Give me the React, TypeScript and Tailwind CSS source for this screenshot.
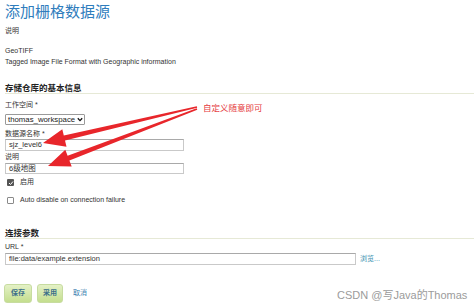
import React from "react";

const cn = '"Liberation Sans", "Noto Sans CJK SC", sans-serif';

function Label({ children, className = "" }: { children: React.ReactNode; className?: string }) {
  return <div className={`h-[8px] text-[7px] leading-[8px] text-[#333] ${className}`}>{children}</div>;
}

function Input({ value, className = "" }: { value: string; className?: string }) {
  return (
    <div
      className={`flex items-center border border-[#c9c9c9] border-t-[#a9a9a9] bg-white pl-[3px] text-[7.5px] text-[#333] ${className}`}
    >
      {value}
    </div>
  );
}

export default function App() {
  return (
    <div
      className="relative h-[306px] w-[474px] overflow-hidden bg-white pl-[5px] text-[#333]"
      style={{ fontFamily: cn }}
    >
      <h1 className="mt-[2px] h-[20px] text-[15px] leading-[20px] text-[#2f7dbd]">添加栅格数据源</h1>
      <Label className="mt-[5px]">说明</Label>
      <Label className="mt-[12px]">GeoTIFF</Label>
      <Label className="mt-[3px]">Tagged Image File Format with Geographic information</Label>

      <div className="mt-[17px] h-[11px] border-b border-[#e6e9d6] text-[8.5px] font-bold leading-[10px] text-[#222]">
        存储仓库的基本信息
      </div>
      <Label className="mt-[7px]">工作空间 *</Label>
      <div className="mt-[5px] flex h-[11px] w-[80px] items-center justify-between overflow-hidden rounded-[1px] border border-[#9a9a9a] bg-white pl-[2px] pr-[1.5px] text-[7.8px] text-[#222]">
        <span className="whitespace-nowrap">thomas_workspace</span>
        <svg className="shrink-0" width="6" height="5" viewBox="0 0 6 5">
          <path d="M0.8 1.2 L3 3.6 L5.2 1.2" fill="none" stroke="#111" strokeWidth="1.3" />
        </svg>
      </div>
      <Label className="mt-[5px]">数据源名称 *</Label>
      <Input value="sjz_level6" className="mt-[1px] h-[12px] w-[179px]" />
      <Label className="mt-[2px]">说明</Label>
      <Input value="6级地图" className="mt-[2px] h-[11px] w-[179px]" />

      <div className="mt-[4px] flex h-[9px] items-center pl-[2px] text-[7px]">
        <span className="flex h-[7px] w-[7px] items-center justify-center rounded-[1px] bg-[#555]">
          <svg width="6" height="6" viewBox="0 0 6 6">
            <path d="M1 3 L2.5 4.5 L5 1.5" fill="none" stroke="#fff" strokeWidth="1" />
          </svg>
        </span>
        <span className="ml-[6px]">启用</span>
      </div>
      <div className="mt-[9px] flex h-[9px] items-center pl-[2px] text-[7px]">
        <span className="h-[7px] w-[7px] rounded-[1px] border border-[#8a8a8a] bg-white" />
        <span className="ml-[6px]">Auto disable on connection failure</span>
      </div>

      <div className="mt-[23px] h-[11px] border-b border-[#e6e9d6] text-[8.5px] font-bold leading-[10px] text-[#222]">
        连接参数
      </div>
      <Label className="mt-[4px]">URL *</Label>
      <div className="mt-[2px] flex items-center">
        <Input value="file:data/example.extension" className="h-[12px] w-[351px]" />
        <span className="ml-[4px] text-[7px] text-[#3a8fb0]">浏览...</span>
      </div>

      <div className="mt-[19px] -ml-[1px] flex h-[19px] items-center">
        <button className="h-[19px] w-[28px] rounded-[3px] border border-[#c7dca0] bg-gradient-to-b from-[#e4f1c6] to-[#c4de8e] text-[7px] font-bold text-[#3b6f8a]">
          保存
        </button>
        <button className="ml-[5px] h-[19px] w-[26px] rounded-[3px] border border-[#c7dca0] bg-gradient-to-b from-[#e4f1c6] to-[#c4de8e] text-[7px] font-bold text-[#3b6f8a]">
          采用
        </button>
        <span className="ml-[10px] text-[7px] text-[#3b7fb0]">取消</span>
      </div>

      <div className="absolute left-[203px] top-[103px] text-[8.5px] leading-[11px] text-[#e5393d]">自定义随意即可</div>
      <svg className="pointer-events-none absolute left-0 top-0" width="474" height="306" viewBox="0 0 474 306">
        <polygon
          fill="#e8262b"
          points="43,143 66.5,146.8 65,140.4 197.2,107.8 196.8,106.2 63.8,135.6 62.3,129.2"
        />
        <polygon
          fill="#e8262b"
          points="48,166 71.7,166.5 69.4,160.4 197.3,109.7 196.7,108.3 67.6,155.8 65.3,149.7"
        />
      </svg>
      <div className="absolute left-[337px] top-[288px] text-[11px] leading-[14px] text-[#9b9b9b]">CSDN @写Java的Thomas</div>
    </div>
  );
}
